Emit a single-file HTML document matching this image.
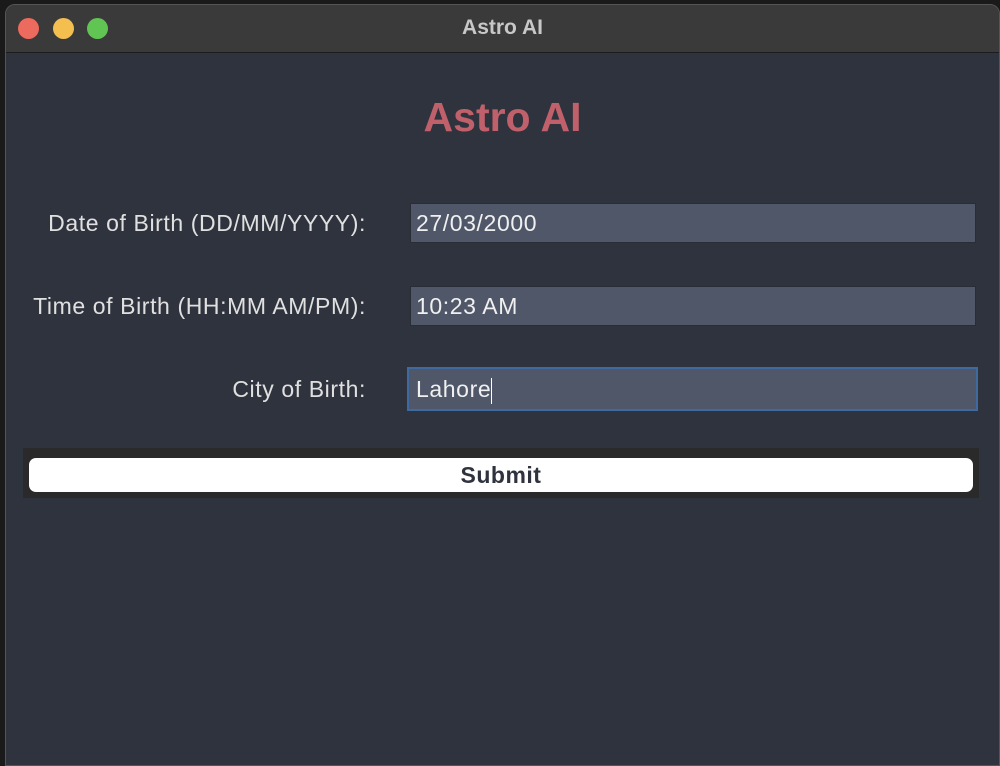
<!DOCTYPE html>
<html><head><style>
body{margin:0;width:1000px;height:750px;background:#1a1a1a;position:relative;overflow:hidden;font-family:"Liberation Sans",sans-serif}
.win{position:absolute;left:5px;top:4px;width:993px;height:760px;background:#2f333e;border-radius:10px 10px 0 0;overflow:hidden;border:1px solid #555}
.tb{position:absolute;left:0;top:0;right:0;height:47px;background:#3a3a3a;border-bottom:1px solid #1c1c1c;color:#c8c8c8;font-weight:bold;font-size:21px;text-align:center;line-height:46px}
.d{position:absolute;top:13px;width:21px;height:21px;border-radius:50%}
.t{position:absolute;color:#e0e0e0;font-size:23px;letter-spacing:0.6px}
.f{position:absolute;background:#4f5769;color:#f0f0f0;font-size:23px;letter-spacing:0.6px;box-sizing:border-box;padding-left:5px;border:1px solid #2a2d35}
</style></head><body>
<div class="win">
<div class="tb">Astro AI
<div class="d" style="left:12px;background:#ed6a5e"></div>
<div class="d" style="left:47px;background:#f5bf4f"></div>
<div class="d" style="left:81px;background:#61c554"></div>
</div>
<div style="position:absolute;left:0;right:0;top:89px;text-align:center;color:#c0606a;font-weight:bold;font-size:41px">Astro AI</div>
<div class="t" style="right:633px;top:205px">Date of Birth (DD/MM/YYYY):</div>
<div class="t" style="right:633px;top:288px">Time of Birth (HH:MM AM/PM):</div>
<div class="t" style="right:633px;top:371px">City of Birth:</div>
<div class="f" style="left:404px;top:198px;width:566px;height:40px;line-height:38px">27/03/2000</div>
<div class="f" style="left:404px;top:281px;width:566px;height:40px;line-height:38px">10:23 AM</div>
<div class="f" style="left:401px;top:362px;width:571px;height:44px;line-height:40px;border:2px solid #3e6aa0;padding-left:7px">Lahore<span style="display:inline-block;width:1px;height:26px;background:#fff;vertical-align:middle"></span></div>
<div style="position:absolute;left:17px;top:443px;width:956px;height:50px;background:#2a2a2b"></div>
<div style="position:absolute;left:23px;top:453px;width:944px;height:34px;background:#fff;border-radius:7px;text-align:center;line-height:34px;font-weight:bold;font-size:23px;letter-spacing:0.5px;color:#2f333e">Submit</div>
</div>
</body></html>
